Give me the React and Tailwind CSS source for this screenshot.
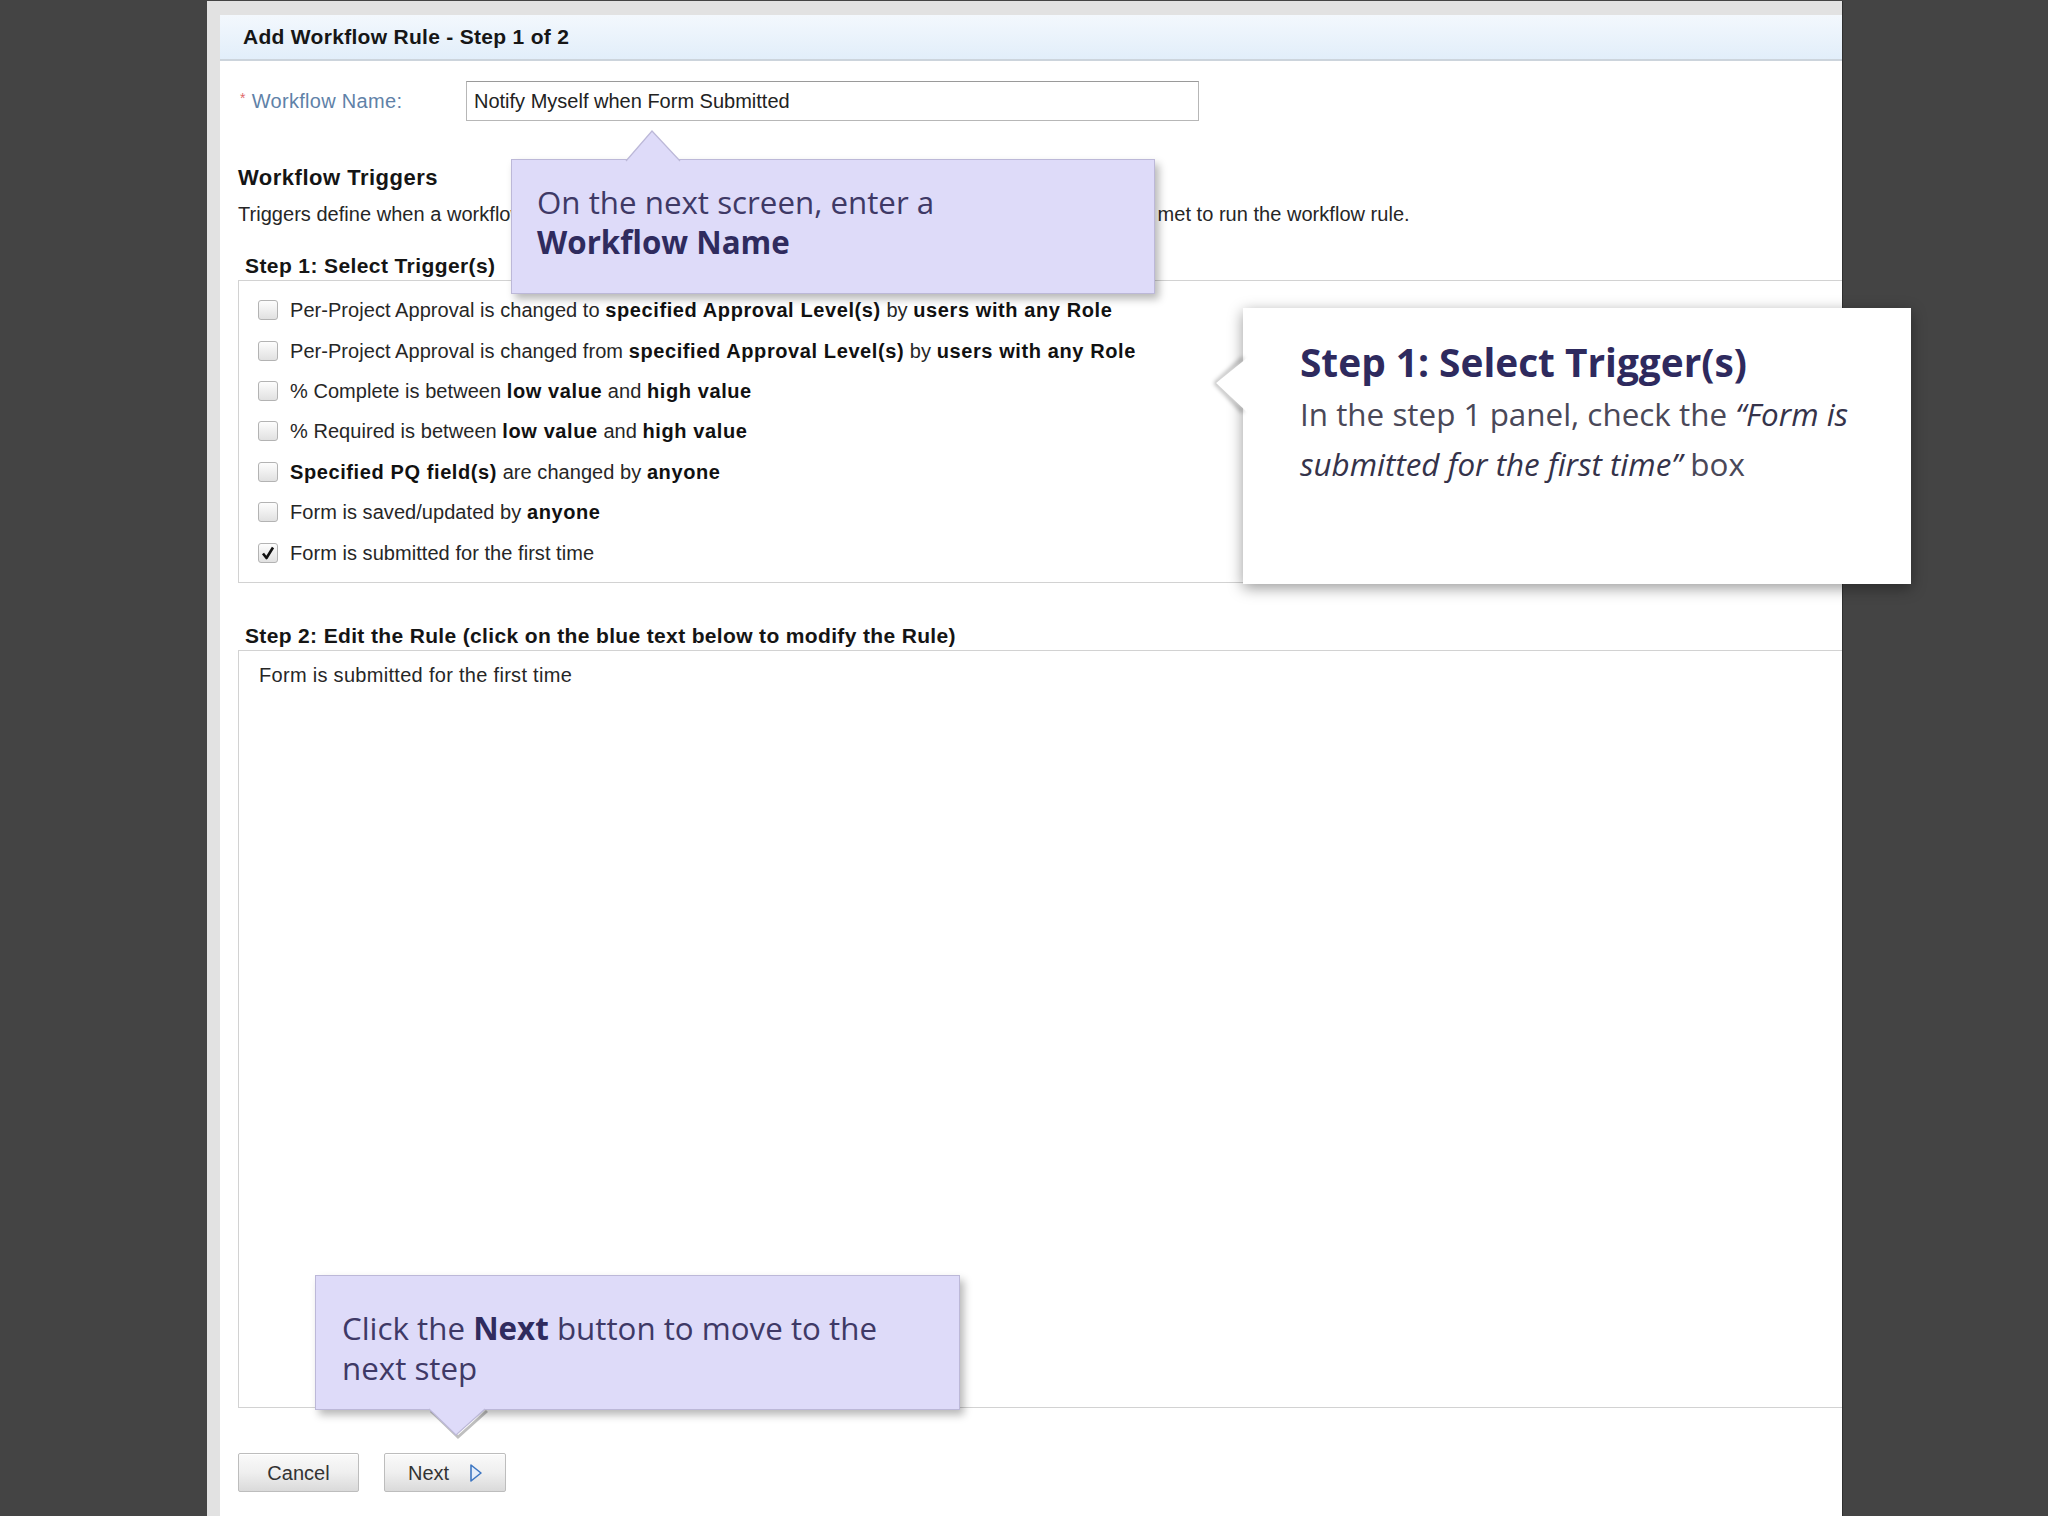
import React from "react";

function Check({ checked }) {
  return (
    <span className="flex h-[20px] w-[20px] shrink-0 items-center justify-center rounded-[3px] border border-[#b3b3b3] bg-gradient-to-b from-[#fdfdfd] to-[#e1e1e1]">
      {checked && (
        <svg width="14" height="14" viewBox="0 0 14 14">
          <path d="M2 7.5 L5.5 12 L12 1.5" stroke="#111" strokeWidth="2.6" fill="none" strokeLinejoin="round" />
        </svg>
      )}
    </span>
  );
}

const B = ({ children }) => <b className="font-bold tracking-[0.6px] text-[#111]">{children}</b>;

function Row({ checked, children }) {
  return (
    <div className="flex h-[40.4px] items-center gap-[12px]">
      <Check checked={checked} />
      <span className="whitespace-nowrap text-[20px] leading-[24px] tracking-[0.05px] text-[#262626]">{children}</span>
    </div>
  );
}

export default function App() {
  return (
    <div className="relative h-[1516px] w-[2048px] overflow-hidden bg-[#444444] font-['Liberation_Sans',Arial,sans-serif]">
      <div className="ml-[207px] mt-px h-[1515px] w-[1636px] border-r border-[#2f2f2f] bg-[#e2e2e2] pl-[13px] pt-[14px]">
        <div className="flex h-full flex-col bg-white">
          <div className="flex h-[46px] shrink-0 items-center border-b-2 border-[#ccd4dc] bg-gradient-to-b from-[#f3f8fd] to-[#e2eefa] pl-[23px] text-[21px] font-bold tracking-[0.3px] text-[#161616]">
            Add Workflow Rule - Step 1 of 2
          </div>

          <div className="flex flex-col pl-[18px]">
            <div className="mt-[20px] flex h-[40px] items-center">
              <div className="flex w-[228px] items-center pl-[2px] text-[20px] tracking-[0.3px] text-[#5f82a8]">
                <span className="mr-[6px] -mt-[6px] text-[14px] text-[#e06a6a]">*</span>
                <span>Workflow Name:</span>
              </div>
              <div className="flex h-[40px] w-[733px] items-center border border-[#b7b7b7] border-t-[#9a9a9a] pl-[7px] text-[20px] text-[#222]">
                Notify Myself when Form Submitted
              </div>
            </div>

            <div className="mt-[43px] h-[28px] text-[22px] font-bold leading-[28px] tracking-[0.5px] text-[#151515]">
              Workflow Triggers
            </div>
            <div className="mt-[10px] h-[24px] whitespace-nowrap text-[20px] leading-[24px] tracking-[0.03px] text-[#262626]">
              Triggers define when a workflow rule will be run. All the selected trigger conditions listed below must be met to run the workflow rule.
            </div>

            <div className="mt-[28px] h-[24px] pl-[7px] text-[21px] font-bold leading-[24px] tracking-[0.4px] text-[#151515]">
              Step 1: Select Trigger(s)
            </div>
            <div className="mt-[2px] h-[303px] border-b border-l border-t border-[#d2d2d2] pl-[19px] pt-[9px]">
              <Row>
                Per-Project Approval is changed to <B>specified Approval Level(s)</B> by <B>users with any Role</B>
              </Row>
              <Row>
                Per-Project Approval is changed from <B>specified Approval Level(s)</B> by <B>users with any Role</B>
              </Row>
              <Row>
                % Complete is between <B>low value</B> and <B>high value</B>
              </Row>
              <Row>
                % Required is between <B>low value</B> and <B>high value</B>
              </Row>
              <Row>
                <B>Specified PQ field(s)</B> are changed by <B>anyone</B>
              </Row>
              <Row>
                Form is saved/updated by <B>anyone</B>
              </Row>
              <Row checked>Form is submitted for the first time</Row>
            </div>

            <div className="mt-[41px] h-[24px] pl-[7px] text-[21px] font-bold leading-[24px] tracking-[0.35px] text-[#151515]">
              Step 2: Edit the Rule (click on the blue text below to modify the Rule)
            </div>
            <div className="mt-[2px] h-[758px] border-b border-l border-t border-[#d2d2d2] pl-[20px] pt-[12px]">
              <div className="h-[24px] text-[20px] leading-[24px] tracking-[0.3px] text-[#262626]">Form is submitted for the first time</div>
            </div>

            <div className="mt-[45px] flex gap-[25px]">
              <button className="flex h-[39px] w-[121px] items-center justify-center rounded-[2px] border border-[#bdbdbd] bg-gradient-to-b from-[#fafafa] via-[#efefef] to-[#dadada] text-[20px] text-[#333] shadow-[inset_0_1px_0_#fff]">
                Cancel
              </button>
              <button className="flex h-[39px] w-[122px] items-center rounded-[2px] border border-[#bdbdbd] bg-gradient-to-b from-[#fafafa] via-[#efefef] to-[#dadada] pl-[23px] text-[20px] text-[#333] shadow-[inset_0_1px_0_#fff]">
                Next
                <svg className="ml-[20px]" width="14" height="20" viewBox="0 0 14 20">
                  <path d="M2 2 L12 10 L2 18 Z" fill="#e4edf9" stroke="#3d76c2" strokeWidth="1.6" strokeLinejoin="round" />
                </svg>
              </button>
            </div>
          </div>
        </div>
      </div>

      {/* Tooltip 1 */}
      <div className="absolute left-[511px] top-[159px] h-[135px] w-[644px] border border-[#bcb8d8] bg-[#dedbf9] pl-[25px] pt-[22px] font-['Open_Sans',sans-serif] text-[31.3px] leading-[40px] text-[#3e3966] shadow-[4px_5px_8px_rgba(0,0,0,0.28)]">
        <div>On the next screen, enter a</div>
        <div className="font-bold text-[#2f2b5e]">Workflow Name</div>
      </div>
      <svg className="absolute left-[625px] top-[130px] overflow-visible" width="56" height="31" viewBox="0 0 56 31">
        <polygon points="1,31 27,1 55,31" fill="#dedbf9" />
        <path d="M1 31 L27 1 L55 31" fill="none" stroke="#bcb8d8" strokeWidth="1.2" />
      </svg>

      {/* Tooltip 2 */}
      <div className="absolute left-[1243px] top-[308px] h-[276px] w-[668px] bg-white pl-[57px] pt-[29px] font-['Open_Sans',sans-serif] shadow-[0_4px_14px_rgba(0,0,0,0.4)]">
        <div className="text-[38.8px] font-bold leading-[50px] text-[#2e2a5e]">Step 1: Select Trigger(s)</div>
        <div className="mt-[2px] text-[31.4px] leading-[50px] text-[#4a4858]">
          In the step 1 panel, check the <i className="text-[#35334a]">“Form is submitted for the first time”</i> box
        </div>
      </div>
      <svg className="absolute left-[1213px] top-[356px] overflow-visible" width="34" height="58" viewBox="0 0 34 58">
        <defs>
          <filter id="blurL" x="-50%" y="-50%" width="200%" height="200%">
            <feGaussianBlur stdDeviation="2" />
          </filter>
        </defs>
        <path d="M30 2 L3 27 L30 56" stroke="rgba(0,0,0,0.35)" strokeWidth="3" fill="none" filter="url(#blurL)" />
        <polygon points="34,2 3,27 34,56" fill="#ffffff" />
      </svg>

      {/* Tooltip 3 */}
      <div className="absolute left-[315px] top-[1275px] h-[135px] w-[645px] border border-[#bcb8d8] bg-[#dedbf9] pl-[26px] pt-[32px] font-['Open_Sans',sans-serif] text-[31.3px] leading-[40px] text-[#3e3966] shadow-[4px_5px_8px_rgba(0,0,0,0.28)]">
        <div>
          Click the <b className="font-bold text-[#2f2b5e]">Next</b> button to move to the
        </div>
        <div>next step</div>
      </div>
      <svg className="absolute left-[428px] top-[1409px] overflow-visible" width="58" height="28" viewBox="0 0 58 28">
        <path d="M1 0 L28 26 L57 0" fill="none" stroke="rgba(0,0,0,0.25)" strokeWidth="3" transform="translate(2,2)" />
        <polygon points="1,0 28,26 57,0" fill="#dedbf9" />
        <path d="M1 0 L28 26 L57 0" fill="none" stroke="#bcb8d8" strokeWidth="1.2" />
      </svg>
    </div>
  );
}
